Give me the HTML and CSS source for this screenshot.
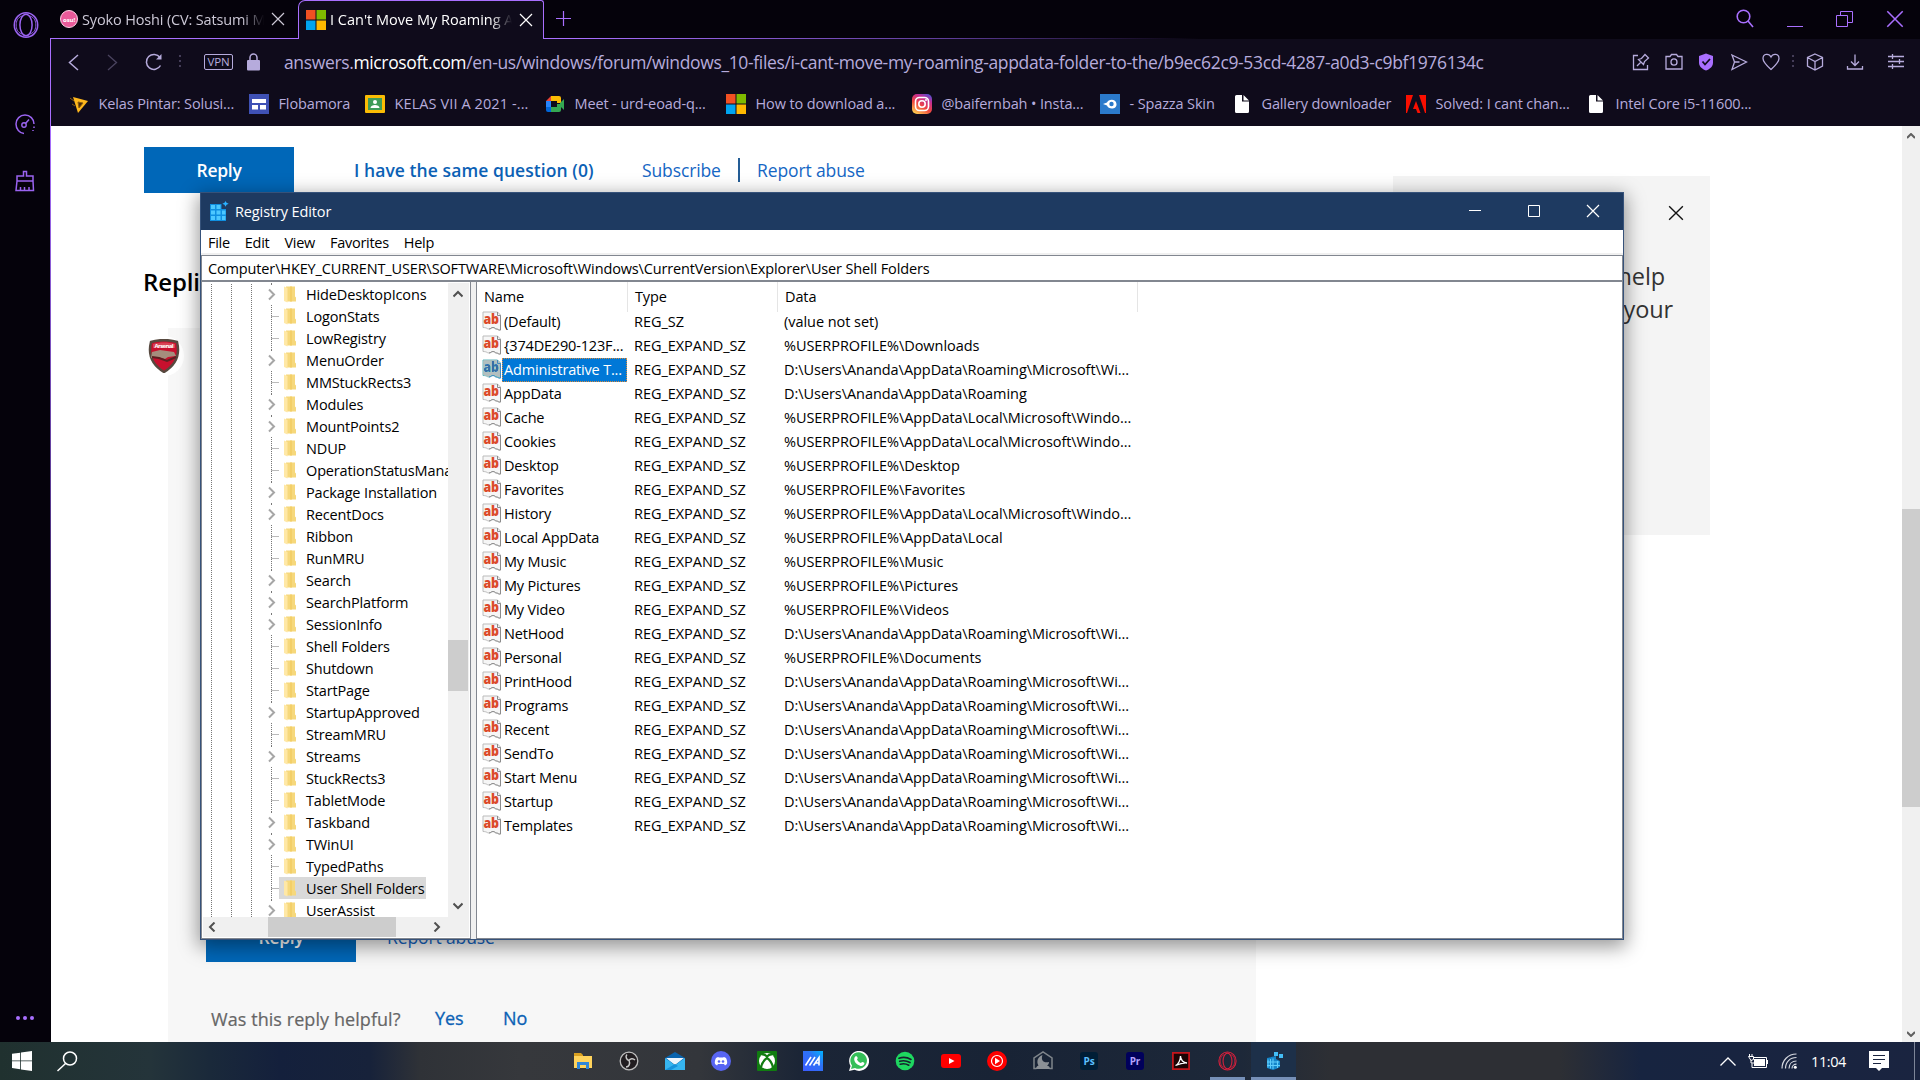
FILE: index.html
```
<!DOCTYPE html>
<html lang="en">
	<head>
		<meta charset="UTF-8" />
		<meta name="viewport" content="width=device-width, initial-scale=1.0" />
		<title>I Can't Move My Roaming AppData</title>
		<link rel="stylesheet" href="styles.css">
	</head>
	<body>
		<!-- shared icons -->
		<svg class="defs" width="0" height="0">
			<symbol id="x" viewBox="0 0 14 14"><path d="M1 1L13 13M13 1L1 13" fill="none" stroke="currentColor" stroke-width="1.200" /></symbol>
			<symbol id="ms" viewBox="0 0 20 20">
				<path fill="#f25022" d="M0 0h9.5v9.5H0z" /><path fill="#7fba00" d="M10.5 0H20v9.5h-9.5z" />
				<path fill="#00a4ef" d="M0 10.5h9.5V20H0z" /><path fill="#ffb900" d="M10.5 10.5H20V20h-9.5z" />
			</symbol>
			<symbol id="file" viewBox="0 0 20 20"><path fill="#fff" d="M3 2.500a1.500 1.500 0 0 1 1.500-1.500H10v6.500h7V17.500a1.500 1.500 0 0 1-1.500 1.500H4.500A1.500 1.500 0 0 1 3 17.500zM11.500 1l5.500 5.500h-5.500z" /></symbol>
			<symbol id="folder" viewBox="0 0 13 17">
				<path fill="#f6d87c" d="M2 .5h9v10l1 1v4H2z" /><path fill="#f3cf68" d="M6 .5h2v15H6z" />
				<path fill="#ffe8a6" d="M0 .5l3.500 1.500v14.500L0 15z" />
			</symbol>
			<symbol id="opera" viewBox="0 0 28 32"><g fill="none" stroke="currentColor" stroke-width="1.600"><ellipse cx="14" cy="16" rx="12.500" ry="13" /><ellipse cx="14" cy="16" rx="6.500" ry="11.500" /><path d="M9.500 6.500C5 8 3.500 12 3.500 16s1.500 8 6 9.500M18.500 6.500C23 8 24.500 12 24.500 16s-1.500 8-6 9.500" stroke-width="1" /></g></symbol>
		</svg>

		<div class="browser">
			<div class="sidebar">
				<svg class="opera-logo" width="28" height="30"><use href="#opera" /></svg>
				<svg class="speed" width="20" height="22" viewBox="0 0 20 22"><path d="M9 20.500C4.500 20 1 16 1 11a9 9 0 0 1 18 0" fill="none" stroke="currentColor" stroke-width="1.500" /><path d="M19 13.500v1.500M18 17v1" stroke="currentColor" stroke-width="1.500" /><circle cx="9" cy="12" r="2.200" fill="none" stroke="currentColor" stroke-width="1.400" /><path d="M10.500 10.500L14 6.500" stroke="currentColor" stroke-width="1.500" /></svg>
				<svg class="brush" width="20" height="22" viewBox="0 0 20 22"><path d="M2 11V6h6.500V1.500h3V6H18v5zM2 11L1 20.500h17.500L18 11M5.500 20.500V17M9.500 20.500V17M14 20.500V17" fill="none" stroke="currentColor" stroke-width="1.500" /></svg>
				<div class="dots"><i></i><i></i><i></i></div>
			</div>
			<div class="main">
				<div class="tabs">
					<div class="tab">
						<svg width="18" height="18" viewBox="0 0 18 18"><circle cx="9" cy="9" r="8.500" fill="#ea5a9a" stroke="#ffd0e5" /><text x="3" y="11.500" class="osu" textLength="12">osu!</text></svg>
						<span class="tab-title">Syoko Hoshi (CV: Satsumi M</span>
						<svg class="tab-x" width="14" height="14"><use href="#x" /></svg>
					</div>
					<div class="tab active">
						<svg width="20" height="20"><use href="#ms" /></svg>
						<span class="tab-title">I Can't Move My Roaming A</span>
						<svg class="tab-x" width="14" height="14"><use href="#x" /></svg>
					</div>
					<svg class="plus" width="15" height="15" viewBox="0 0 15 15"><path d="M0 7.500h15M7.500 0v15" stroke="currentColor" stroke-width="1.200" /></svg>
					<div class="window-buttons">
						<svg width="18" height="19" viewBox="0 0 18 19"><circle cx="7.500" cy="7.500" r="6.300" fill="none" stroke="currentColor" stroke-width="1.600" /><path d="M12 12l5 6" stroke="currentColor" stroke-width="1.600" /></svg>
						<svg width="16" height="18" viewBox="0 0 16 18"><path d="M0 16.500h16" stroke="currentColor" /></svg>
						<svg width="17" height="18" viewBox="0 0 17 18"><path d="M.5 5.500h11v11H.500zM4.500 5.500V1.500h12v11H12" fill="none" stroke="currentColor" /></svg>
						<svg width="18" height="18"><use href="#x" /></svg>
					</div>
				</div>

				<div class="navbar">
					<svg class="back" width="11" height="17" viewBox="0 0 11 17"><path d="M10 1L1.500 8.500 10 16" fill="none" stroke="currentColor" stroke-width="1.500" /></svg>
					<svg class="forward" width="11" height="17" viewBox="0 0 11 17"><path d="M1 1l8.500 7.500L1 16" fill="none" stroke="currentColor" stroke-width="1.300" /></svg>
					<svg class="reload" width="18" height="18" viewBox="0 0 18 18"><path d="M15.500 12.500A7.500 7.500 0 1 1 15 4.500" fill="none" stroke="currentColor" stroke-width="1.500" /><path d="M16.500 1v5.500H11z" fill="currentColor" /></svg>
					<span class="sep"></span>
					<span class="vpn">VPN</span>
					<svg class="lock" width="13" height="18" viewBox="0 0 13 18"><path d="M3 8V4.500a3.500 3.500 0 0 1 7 0V8" fill="none" stroke="currentColor" stroke-width="1.500" /><rect y="7" width="13" height="10.500" rx="1" fill="currentColor" /></svg>
					<span class="url">answers.<b>microsoft.com</b>/en-us/windows/forum/windows_10-files/i-cant-move-my-roaming-appdata-folder-to-the/b9ec62c9-53cd-4287-a0d3-c9bf1976134c</span>
					<div class="nav-icons">
						<svg width="18" height="18" viewBox="0 0 18 18"><path d="M6 2.500H1.500v14h14V12M5 13l4-4M6.500 6.500l5 5 1-3 4-3.500L13 1.500l-3.500 4z" fill="none" stroke="currentColor" stroke-width="1.300" /></svg>
						<svg width="18" height="18" viewBox="0 0 18 18"><path d="M1 3.500h4L6.500 1.500h5L13 3.500h4v12.500H1z" fill="none" stroke="currentColor" stroke-width="1.300" /><ellipse cx="9" cy="9" rx="3" ry="3.200" fill="none" stroke="currentColor" stroke-width="1.300" /></svg>
						<svg width="18" height="18" viewBox="0 0 18 18"><path d="M9 .5l7 2.500v6.500c0 4-3 6.500-7 8-4-1.500-7-4-7-8V3z" fill="#a96fff" /><path d="M5.500 8.500l2.500 3 5-5.500" fill="none" stroke="#0f0b1b" stroke-width="1.800" /></svg>
						<svg width="18" height="18" viewBox="0 0 18 18"><path d="M2 2l14.500 7L2 16.500l2.500-7.500zM4.500 9h5" fill="none" stroke="currentColor" stroke-width="1.300" /></svg>
						<svg width="18" height="18" viewBox="0 0 18 18"><path d="M9 16.500C4 12 1 9 1 5.500 1 .5 7 0 9 4c2-4 8-3.500 8 1.500 0 3.500-3 6.500-8 11z" fill="none" stroke="currentColor" stroke-width="1.300" /></svg>
						<span class="sep"></span>
						<svg class="cube" width="18" height="18" viewBox="0 0 18 18"><path d="M9 1l7.500 3.500v8.500L9 17l-7.500-4V4.500zM1.500 4.500L9 8.500l7.500-4M9 8.500V17" fill="none" stroke="currentColor" stroke-width="1.300" /></svg>
						<svg class="download" width="18" height="18" viewBox="0 0 18 18"><path d="M9 1.500V12M5 8.500L9 12.500l4-4M1.500 13v3h15v-3" fill="none" stroke="currentColor" stroke-width="1.300" /></svg>
						<svg class="setup" width="18" height="18" viewBox="0 0 18 18"><path d="M1 3.500h16M1 8.500h16M1 13.500h16M5.500 1v5M12.500 6v5M5.500 11v5" fill="none" stroke="currentColor" stroke-width="1.300" /></svg>
					</div>
				</div>

				<div class="bookmarks">
					<div><svg width="20" height="20" viewBox="0 0 20 20"><path fill="#ffb81c" d="M4 3l15 4L9 19z" /><path d="M9 8l5 1-4 5zM1 4l4 3M3 10l3 2" fill="#4a2c0a" stroke="#8a5c10" /></svg>Kelas Pintar: Solusi...</div>
					<div><svg width="20" height="20" viewBox="0 0 20 20"><path fill="#3f51b5" d="M0 0h20v20H0z" /><path fill="#fff" d="M3 5h14v4H3zM3 11h6v4.500H3zM11 11h6v4.500h-6z" /></svg>Flobamora</div>
					<div class="kelas"><svg width="20" height="20" viewBox="0 0 20 20"><rect y="1" width="20" height="18" rx="1" fill="#fbbc04" /><path fill="#3f9c58" d="M3 4h14v12H3z" /><circle cx="10" cy="8" r="2" fill="#fff" /><path fill="#fff" d="M5.500 14c0-4 9-4 9 0z" /></svg>KELAS VII A 2021 -...</div>
					<div><svg width="20" height="20" viewBox="0 0 20 20"><path fill="#fbbc04" d="M6 2h8a2 2 0 0 1 2 2v5h-4V7H6z" /><path fill="#ea4335" d="M6 2v5H1z" /><path fill="#2684fc" d="M1 7h5v6H1z" /><path fill="#0066da" d="M1 13h5v5H3a2 2 0 0 1-2-2z" /><path fill="#34a853" d="M6 13h6v-3h4v6a2 2 0 0 1-2 2H6zM15 9l4-4v11l-4-4z" /></svg>Meet - urd-eoad-q...</div>
					<div><svg width="20" height="20"><use href="#ms" /></svg>How to download a...</div>
					<div><svg width="20" height="20" viewBox="0 0 20 20"><defs><linearGradient id="ig" x1="0.2" y1="1" x2="0.8" y2="0"><stop offset="0" stop-color="#ffd050" /><stop offset=".4" stop-color="#f0483d" /><stop offset=".75" stop-color="#c42d92" /><stop offset="1" stop-color="#5a4fd0" /></linearGradient></defs><rect width="20" height="20" rx="5" fill="url(#ig)" /><rect x="3.500" y="3.500" width="13" height="13" rx="4" fill="none" stroke="#fff" stroke-width="1.600" /><circle cx="10" cy="10" r="3.200" fill="none" stroke="#fff" stroke-width="1.600" /><circle cx="14" cy="6" r="1" fill="#fff" /></svg>@baifernbah • Insta...</div>
					<div><svg width="20" height="20" viewBox="0 0 20 20"><path fill="#2b7acb" d="M0 0h20v20H0z" /><path fill="#fff" d="M3 10l4-1.500C8 5 16 4 16.500 10S8 15.500 7 11.500z" /><circle cx="11.500" cy="10" r="2.200" fill="#2b7acb" /></svg>- Spazza Skin</div>
					<div><svg width="20" height="20"><use href="#file" /></svg>Gallery downloader</div>
					<div><svg width="20" height="20" viewBox="0 0 20 20"><path fill="#fa0f00" d="M0 1h7L1 19H0zM13 1h7v18h-1zM10 7l4.500 12h-3l-1.500-4H7z" /></svg>Solved: I cant chan...</div>
					<div><svg width="20" height="20"><use href="#file" /></svg>Intel Core i5-11600...</div>
				</div>

				<div class="page">
					<div class="thread">
						<div class="actions">
							<button class="reply">Reply</button>
							<a class="same">I have the same question (0)</a>
							<a class="subscribe">Subscribe</a>
							<a class="abuse">Report abuse</a>
						</div>
						<h2>Replies</h2>
						<div class="answer">
							<div class="avatar">
								<svg width="32" height="34" viewBox="0 0 32 34"><path d="M3 3C10 .5 22 .5 29 3c3 12 0 22-13 30C3 25 0 15 3 3z" fill="#c8102e" stroke="#57493f" stroke-width="2.500" /><path d="M5 5c7-2 15-2 22 0v4H5z" fill="#d84255" /><text x="6.500" y="8.500" class="crest" textLength="19">Arsenal</text><path d="M4 13l8-2 14 2 2 4-8 1-3 2-7-2-7 1z" fill="#a58d7d" /><path d="M4 18l7 1 8 3 9-4" fill="none" stroke="#5e2022" stroke-width="2" /></svg>
							</div>
							<div class="answer-actions">
								<button class="reply">Reply</button>
								<a>Report abuse</a>
							</div>
							<div class="helpful">
								<span>Was this reply helpful?</span>
								<a class="yes">Yes</a>
								<a>No</a>
							</div>
						</div>
					</div>
					<div class="survey">
						<svg width="16" height="16"><use href="#x" /></svg>
						<p>help</p>
						<p class="second">your</p>
					</div>
					<div class="page-scroll">
						<svg width="8" height="6" viewBox="0 0 8 6"><path d="M0 5l4-4 4 4" fill="none" stroke="#606060" stroke-width="2" /></svg>
						<div class="thumb"></div>
						<svg width="8" height="6" viewBox="0 0 8 6"><path d="M0 1l4 4 4-4" fill="none" stroke="#606060" stroke-width="2" /></svg>
					</div>
				</div>
			</div>
		</div>

		<div class="regedit">
			<div class="titlebar">
				<svg width="20" height="20" viewBox="0 0 20 20"><path fill="#0f8fe0" d="M1 3h16v17H1z" /><path fill="#4cc8ff" d="M2 4h4v4H2zM7.500 4h4v4h-4zM2 9.500h4v4H2zM7.500 9.500h4v4h-4zM13 9.500h3.500v4H13zM2 15h4v4H2zM7.500 15h4v4h-4zM13 15h3.500v4H13z" /><path fill="#1e3a61" d="M12.500 3H17v5h-4.500z" /><path fill="#2bb0ff" d="M16.500 0l1 1.800 2.200 1-2.200 1-1 2-1-2-2.200-1 2.200-1z" /></svg>
				<span>Registry Editor</span>
				<div class="reg-buttons">
					<svg width="14" height="14" viewBox="0 0 14 14"><path d="M1 6.500h12" stroke="#fff" /></svg>
					<svg width="14" height="14" viewBox="0 0 14 14"><path d="M1.500 1.500h11v11h-11z" fill="none" stroke="#fff" /></svg>
					<svg width="14" height="14"><use href="#x" /></svg>
				</div>
			</div>
			<div class="menu"><span>File</span><span>Edit</span><span>View</span><span>Favorites</span><span>Help</span></div>
			<div class="address">Computer\HKEY_CURRENT_USER\SOFTWARE\Microsoft\Windows\CurrentVersion\Explorer\User Shell Folders</div>
			<div class="panes">
				<div class="tree-pane">
					<div class="tree-top">
						<div class="tree" id="tree"></div>
						<div class="vscroll">
							<svg width="10" height="8" viewBox="0 0 10 8"><path d="M.5 6.500L5 2l4.500 4.500" fill="none" stroke="#505050" stroke-width="2" /></svg>
							<div class="thumb"></div>
							<svg width="10" height="8" viewBox="0 0 10 8"><path d="M.5 1.500L5 6l4.500-4.500" fill="none" stroke="#505050" stroke-width="2" /></svg>
						</div>
					</div>
					<div class="hscroll">
						<svg width="8" height="10" viewBox="0 0 8 10"><path d="M6.500 .5L2 5l4.500 4.500" fill="none" stroke="#505050" stroke-width="2" /></svg>
						<div class="thumb"></div>
						<svg width="8" height="10" viewBox="0 0 8 10"><path d="M1.500 .5L6 5 1.500 9.500" fill="none" stroke="#505050" stroke-width="2" /></svg>
					</div>
				</div>
				<div class="list-pane">
					<div class="list-head"><span>Name</span><span>Type</span><span>Data</span></div>
					<div id="values"></div>
				</div>
			</div>
		</div>

		<div class="taskbar">
			<svg class="start" width="20" height="20" viewBox="0 0 20 20"><path fill="#fff" d="M0 2.800l8.200-1.100v7.800H0zM9 1.600L20 0v9.500H9zM0 10.300h8.200v7.900L0 17.100zM9 10.300h11V20L9 18.400z" /></svg>
			<svg class="search" width="22" height="21" viewBox="0 0 22 21"><circle cx="14" cy="7.500" r="6.500" fill="none" stroke="#fff" stroke-width="1.500" /><path d="M9.500 12.500L1.500 20" stroke="#fff" stroke-width="1.500" /></svg>
			<div class="apps">
				<div><svg width="20" height="20" viewBox="0 0 20 20"><path fill="#d9a021" d="M1 2h7l2 2v4H1z" /><path fill="#ffd35c" d="M1 5h18v12H1z" /><path fill="#2f86d8" d="M4 11h12v7h-3v-4H7v4H4z" /></svg></div>
				<div><svg width="20" height="20" viewBox="0 0 20 20"><circle cx="10" cy="10" r="8.800" fill="#211d20" stroke="#bdbdbd" stroke-width="1.300" /><path d="M8 3.500c-2 2-.5 5.500 2 6M16 9c-2-2-5-1.500-6 .5M7 16c3 0 4.500-3.500 3-6.500" fill="none" stroke="#c8c8c8" stroke-width="1.500" /></svg></div>
				<div><svg width="20" height="20" viewBox="0 0 20 20"><path fill="#0a64ad" d="M0 7l10-6 10 6v5H0z" /><path fill="#eef6fc" d="M1 7h18l-9 7z" /><path fill="#36b5f0" d="M0 7l10 7L20 7v12H0z" /><path fill="#1593dc" d="M0 19l10-6 3 2-7 4z" /></svg></div>
				<div><svg width="20" height="20" viewBox="0 0 20 20"><circle cx="10" cy="10" r="10" fill="#5865f2" /><path fill="#fff" d="M7 6l1 .5h4L13 6l2 1c1 2 1.500 4 1 6l-2 1.500-1-1.500H7l-1 1.500L4 13c-.5-2 0-4 1-6z" /><circle cx="8" cy="10.500" r="1.300" fill="#5865f2" /><circle cx="12" cy="10.500" r="1.300" fill="#5865f2" /></svg></div>
				<div><svg width="20" height="20" viewBox="0 0 20 20"><rect width="20" height="20" rx="1" fill="#107c10" /><circle cx="10" cy="10" r="8" fill="#fff" /><path d="M4 16.500C5 12 7.500 8.500 10 7c2.500 1.500 5 5 6 9.500M4.500 3.500C7 3 9 4.500 10 5.500c1-1 3-2.500 5.500-2" fill="none" stroke="#107c10" stroke-width="2.200" /></svg></div>
				<div><svg width="20" height="20" viewBox="0 0 20 20"><defs><linearGradient id="ac" x1="0" y1="1" x2="1" y2="0"><stop offset="0" stop-color="#3c5cff" /><stop offset=".6" stop-color="#2d72f5" /><stop offset="1" stop-color="#00b4ff" /></linearGradient></defs><path fill="url(#ac)" d="M0 0h20v20H0z" /><path d="M2.500 14.500l5.500-8.500M6.500 14.500L12 6M10.500 14.500L16 6.500v8M12.500 12H16" fill="none" stroke="#fff" stroke-width="1.600" /></svg></div>
				<div><svg width="20" height="20" viewBox="0 0 20 20"><path fill="#fff" d="M0 20l1.500-5A10 10 0 1 1 5.500 18.800z" /><path fill="#35bf58" d="M2 18l1-3.500A8.300 8.300 0 1 1 6 17z" /><path fill="#fff" d="M7 5c2 1 2 2.500 1 3.500 1 2 2 3 4 3.500 1-1.500 2-1 3.500 0-1 4-4 3.500-7 1.500C5 11 4 7 7 5z" /></svg></div>
				<div><svg width="20" height="20" viewBox="0 0 20 20"><circle cx="10" cy="10" r="9.300" fill="#1ed760" /><path d="M4 7.200c4-1.200 8.500-.8 12 1.200M4.700 10.300c3.500-1 7.200-.5 10.300 1.200M5.300 13.200c3-.8 6-.4 8.500 1" fill="none" stroke="#17202e" stroke-width="1.700" stroke-linecap="round" /></svg></div>
				<div><svg width="20" height="20" viewBox="0 0 20 20"><rect y="3" width="20" height="14" rx="3" fill="#f00" /><path fill="#fff" d="M8 7l5.500 3L8 13z" /></svg></div>
				<div><svg width="20" height="20" viewBox="0 0 20 20"><circle cx="10" cy="10" r="10" fill="#f00" /><circle cx="10" cy="10" r="5.500" fill="none" stroke="#fff" stroke-width="1.200" /><path fill="#fff" d="M8 6.800l5 3.200-5 3.200z" /></svg></div>
				<div><svg width="20" height="20" viewBox="0 0 20 20"><path d="M3.500 17.500H1V7l9-6 9 6v10.500h-2.500" fill="none" stroke="#7f858b" stroke-width="1.500" /><path fill="#8c9196" d="M9.500 4c-2 5 1 8.500 6.500 7 0 2-1 3-2 3.500 2 .5 3 1.500 3 3.500H3c0-2 1-3 2.500-3.500C3 10.500 5 5.500 9.500 4z" /></svg></div>
				<div class="adobe ps">Ps</div>
				<div class="adobe pr">Pr</div>
				<div><svg width="20" height="20" viewBox="0 0 20 20"><path fill="#1c0404" stroke="#c4161c" stroke-width="1.800" d="M1.900 1.900h16.200v16.200H1.900z" /><path d="M4.500 14.500c3-1 5-6 5-9.500 0 4 3 7 6.500 7-4-.5-8 1-11.500 2.500z" fill="none" stroke="#fff" stroke-width="1.300" /></svg></div>
				<div class="running red"><svg width="21" height="22"><use href="#opera" /></svg></div>
				<div class="current"><svg width="20" height="20" viewBox="0 0 20 20"><path fill="#1485c9" d="M3 7l9-2v13l-3 1-6-2zM12 8l4 2v6l-4 2z" /><path d="M4 8.500v8M6.500 8v9.500M9 7.500V18M13.500 10v7M3 11h12M3 14.500h13" stroke="#60cdfb" stroke-width="1.100" /><path fill="#43bdf5" d="M10 1h4v4h-4zM15 3h4v4h-4z" /></svg></div>
			</div>
			<div class="tray">
				<svg class="up" width="16" height="9" viewBox="0 0 16 9"><path d="M.5 8.500L8 1l7.500 7.500" fill="none" stroke="#fff" stroke-width="1.300" /></svg>
				<svg class="battery" width="20" height="15" viewBox="0 0 20 15"><path d="M4 3.500h14.500v10H4v-4" fill="none" stroke="#fff" /><path fill="#fff" d="M6 5h11v7H6zM19 6h1v4h-1z" /><path d="M1.500 0v3M4 0v3M.5 2.500h5v3l-2.500 1zM3 6v3h3" fill="#1a2440" stroke="#fff" /></svg>
				<svg class="wifi" width="16" height="16" viewBox="0 0 16 16"><g fill="none" stroke="#d6d9e0" stroke-width="1.200"><path d="M1 15.500C1 7.500 7 1 15.500 1" /><path d="M4.500 15.500C4.500 9 9 4.500 15.500 4.500" /><path d="M8 15.500C8 11 11 8 15.500 8" /><path d="M11 15.500c0-2.500 2-4.300 4.500-4.300" /></g><circle cx="14.300" cy="14.300" r="1.500" fill="#fff" /></svg>
				<span class="clock">11:04</span>
				<svg class="notice" width="20" height="20" viewBox="0 0 20 20"><path fill="#fff" d="M0 0h20v17h-7l-3 3-3-3H0z" /><path d="M4 4.500h12M4 8.500h12M4 12.500h8" stroke="#1a2440" /></svg>
				<span class="show-desktop"></span>
			</div>
		</div>
		<script src="script.js"></script>
	</body>
</html>
```
FILE: styles.css
```
* {
	box-sizing: border-box;
}
body {
	margin: 0;
	width: 1920px;
	height: 1080px;
	overflow: hidden;
	display: flex;
	flex-direction: column;
	font-family: "Open Sans", "Noto Sans", sans-serif;
	font-size: 14.5px;
	letter-spacing: -0.12px;
	color: #000;
}
svg {
	display: block;
	flex: none;
}
.defs {
	display: none;
}
.browser {
	display: flex;
	height: 1042px;
	background: #05020b;
}

/* opera sidebar */
.sidebar {
	width: 50px;
	display: flex;
	flex-direction: column;
	align-items: center;
	color: #9a63f0;
}
.opera-logo {
	margin: 10px 0 0 1px;
}
.speed {
	margin-top: 73px;
}
.brush {
	margin-top: 35px;
}
.dots {
	display: flex;
	gap: 3px;
	margin-top: auto;
	margin-bottom: 22px;
}
.dots i {
	width: 4px;
	height: 4px;
	border-radius: 50%;
	background: #a96fff;
}
.main {
	flex: 1;
	display: flex;
	flex-direction: column;
	min-width: 0;
}

/* tabs */
.tabs {
	height: 39px;
	display: flex;
	background: linear-gradient(to right, #a96fff 530px, #5e3c98 900px, #05020b 1150px) bottom / 100% 1px no-repeat;
}
.tab {
	width: 248px;
	height: 38px;
	display: flex;
	align-items: center;
	padding: 0 0 0 10px;
	color: #ccc8d6;
}
.tab-title {
	width: 182px;
	margin-left: 4px;
	overflow: hidden;
	white-space: nowrap;
	letter-spacing: -0.15px;
	-webkit-mask-image: linear-gradient(to right, #000 88%, transparent);
}
.tab-x {
	margin-left: 7px;
}
.tab.active {
	width: 246px;
	height: 39px;
	padding: 0 0 1px 7px;
	background: #0f0b1b;
	border: 1px solid #a96fff;
	border-bottom: 0;
	border-radius: 7px 3px 0 0;
	color: #fff;
}
.active .tab-title {
	letter-spacing: 0;
}
.plus {
	margin: 11px 0 0 12px;
	color: #a96fff;
}
.window-buttons {
	display: flex;
	align-items: center;
	gap: 33px;
	height: 37px;
	margin-left: auto;
	padding-right: 16px;
	color: #a96fff;
}

.navbar {
	height: 47px;
	display: flex;
	align-items: center;
	padding-bottom: 1px;
	background: #0f0b1b;
	border-left: 1px solid #a96fff;
	color: #b6abdc;
}
.back {
	margin-left: 17px;
}
.forward {
	margin-left: 28px;
	opacity: 0.35;
}
.reload {
	margin-left: 27px;
}
.sep {
	width: 2px;
	height: 14px;
	background: repeating-linear-gradient(#443d58 0 2px, transparent 2px 5px);
}
.reload + .sep {
	margin-left: 16px;
}
.vpn {
	width: 29px;
	height: 16px;
	margin-left: 23px;
	border: 1px solid #b6abdc;
	border-radius: 2px;
	font-size: 11.5px;
	line-height: 14px;
	text-align: center;
}
.lock {
	margin-left: 14px;
}
.url {
	margin-left: 24px;
	padding-bottom: 1px;
	font-size: 17.5px;
	letter-spacing: -0.355px;
	white-space: nowrap;
}
.url b {
	font-weight: 400;
	color: #fff;
}
.nav-icons {
	display: flex;
	align-items: center;
	gap: 14.5px;
	margin-left: auto;
	padding-right: 15px;
}
.nav-icons .sep {
	margin-left: -3px;
}
.nav-icons .cube {
	margin-left: -2px;
}
.download {
	margin-left: 7px;
}
.setup {
	margin-left: 9px;
}

.bookmarks {
	height: 40px;
	display: grid;
	grid-template-columns: 180px 116px 180px 181px 186px 188px 132px 174px 180px 180px;
	padding: 0 0 5px 18px;
	background: #0f0b1b;
	border-left: 1px solid #a96fff;
	color: #b6abdc;
	letter-spacing: -0.13px;
}
.bookmarks div {
	display: flex;
	align-items: center;
	gap: 9.5px;
	white-space: nowrap;
}
.bookmarks .kelas {
	letter-spacing: 0.1px;
}

/* forum page */
.page {
	flex: 1;
	display: flex;
	background: linear-gradient(#a96fff, #5b3b93 40%, #05020b 80%) left / 1px 100% no-repeat #fff;
	min-height: 0;
}
.thread {
	width: 1206px;
	display: flex;
	flex-direction: column;
}
.actions {
	display: flex;
	align-items: center;
	margin: 21px 0 0 94px;
	font-size: 17.5px;
}
.reply {
	width: 150px;
	height: 46px;
	padding: 0;
	border: 0;
	background: #0067b8;
	color: #fff;
	font: 600 17.5px "Open Sans", sans-serif;
	letter-spacing: -0.3px;
}
.actions a,
.answer-actions a {
	color: #1566c4;
}
.helpful a,
.actions .same {
	color: #0b61b5;
}
.same {
	width: 288px;
	margin-left: 60px;
	font-weight: 600;
	letter-spacing: 0.07px;
}
.subscribe {
	width: 98px;
	border-right: 2px solid #245d96;
}
.abuse {
	margin-left: 17px;
}
h2 {
	margin: 72px 0 0 93px;
	font-size: 24px;
	line-height: 34px;
	font-weight: 600;
}
.answer {
	flex: 1;
	display: flex;
	flex-direction: column;
	margin: 29px 0 0 118px;
	background: #f7f7f7;
	font-size: 17.5px;
}
.avatar {
	width: 40px;
	height: 40px;
	display: flex;
	align-items: center;
	justify-content: center;
	margin: 8px 0 0 -24px;
	border-radius: 50%;
	background: #fff;
}
.crest {
	font: 700 6px "Open Sans", sans-serif;
	fill: #fff;
}
.answer-actions {
	display: flex;
	align-items: center;
	gap: 31px;
	margin: auto 0 0 38px;
}
.answer-actions .reply,
.answer-actions a {
	padding-bottom: 4px;
}
.helpful {
	display: flex;
	align-items: center;
	height: 30px;
	margin: 42px 0 8px 43px;
	color: #666;
	font-size: 18px;
}
.helpful span {
	width: 224px;
	font-weight: 500;
	letter-spacing: 0.07px;
	-webkit-text-stroke: 0.2px #666;
}
.helpful a {
	padding-bottom: 3px;
	-webkit-text-stroke: 0.3px #0b61b5;
}
.yes {
	width: 68px;
}
.survey {
	width: 317px;
	height: 359px;
	margin: 50px 0 0 137px;
	background: #f4f4f4;
	color: #333;
	text-align: right;
}
.survey svg {
	margin: 29px 0 0 auto;
	margin-right: 26px;
	color: #111;
}
.survey p {
	margin: 39px 45px 0 0;
	font-size: 23.5px;
	line-height: 33px;
}
.survey .second {
	margin: 0 37px 0 0;
}
.page-scroll {
	width: 18px;
	margin-left: auto;
	padding: 7px 0 5px;
	display: flex;
	flex-direction: column;
	align-items: center;
	background: #f0f0f0;
}
.page-scroll .thumb {
	width: 18px;
	height: 298px;
	margin: 370px 0 auto;
	background: #cdcdcd;
}

/* registry editor window */
.regedit {
	position: absolute;
	left: 200px;
	top: 192px;
	width: 1424px;
	height: 748px;
	display: flex;
	flex-direction: column;
	border: 1px solid #36527a;
	background: #f0f0f0;
	box-shadow: 0 5px 18px 2px rgba(0, 0, 0, 0.4);
}
.titlebar {
	height: 37px;
	display: flex;
	align-items: center;
	padding: 0 0 1px 8px;
	background: #1e3a61;
	color: #fff;
}
.titlebar > span {
	margin-left: 6px;
}
.reg-buttons {
	display: flex;
	gap: 45px;
	margin-left: auto;
	padding-right: 23px;
}
.menu {
	height: 23px;
	display: flex;
	gap: 15px;
	padding-left: 7px;
	line-height: 25px;
	letter-spacing: -0.28px;
	background: #fff;
}
.address {
	height: 27px;
	margin-top: 2px;
	padding-left: 6px;
	border: 1px solid #828790;
	border-bottom-width: 2px;
	line-height: 26px;
	letter-spacing: -0.14px;
	background: #fff;
}
.panes {
	flex: 1;
	display: flex;
	gap: 5px;
	min-height: 0;
}
.tree-pane {
	width: 270px;
	padding: 1px;
	border: 1px solid #828790;
	border-top: 0;
	background: #fff;
}
.tree-top {
	display: flex;
	height: 634px;
}
.tree {
	width: 245px;
	overflow: hidden;
	/* guides for the three parent levels */
	background: repeating-linear-gradient(#fff 0 1px, transparent 1px 2px), linear-gradient(to right, transparent 8px, #777 8px 9px, transparent 9px 28px, #777 28px 29px, transparent 29px 48px, #777 48px 49px, transparent 49px);
}
.node {
	height: 22px;
	display: flex;
	align-items: center;
	padding-left: 65px;
	white-space: nowrap;
}
.twig {
	width: 11px;
	height: 22px;
	flex: none;
}
.twig path {
	fill: none;
}
.label {
	height: 22px;
	display: flex;
	align-items: center;
	gap: 9px;
	padding: 2px 2px 0 5px;
	line-height: 20px;
	letter-spacing: -0.15px;
}
.label svg {
	margin-bottom: 1px;
}
.label.selected {
	background: #d9d9d9;
}
.vscroll {
	width: 21px;
	padding: 7px 1px 7px 0;
	display: flex;
	flex-direction: column;
	align-items: center;
	background: #f0f0f0;
}
.vscroll .thumb {
	width: 20px;
	height: 51px;
	margin: 342px 0 auto;
	background: #cdcdcd;
}
.hscroll {
	height: 20px;
	display: flex;
	align-items: center;
	padding: 0 28px 0 5px;
	background: #f0f0f0;
}
.hscroll .thumb {
	width: 128px;
	height: 20px;
	margin: 0 auto 0 52px;
	background: #cdcdcd;
}
.list-pane {
	flex: 1;
	border: 1px solid #828790;
	border-top: 0;
	background: #fff;
}
.list-head {
	display: grid;
	grid-template-columns: 151px 150px 360px;
	height: 28px;
	line-height: 30px;
}
.list-head span {
	padding-left: 7px;
	border-right: 1px solid #e5e5e5;
}
.value {
	display: grid;
	grid-template-columns: 25px 125px 150px 360px;
	height: 24px;
	line-height: 23px;
	white-space: nowrap;
}
.value svg {
	margin: 1px 0 0 5px;
}
.value .name {
	padding-left: 2px;
	letter-spacing: -0.17px;
}
.value .type,
.value .data {
	padding-left: 7px;
}
.value .type {
	letter-spacing: -0.04px;
}
.value .data {
	letter-spacing: -0.05px;
}
.value.selected .name {
	background: #0078d7;
	color: #fff;
	outline: 1px dotted #d98a3a;
	outline-offset: -1px;
}
.value.selected svg {
	filter: sepia(1) hue-rotate(170deg) saturate(3) brightness(0.75);
}
.ab-text {
	font: 800 13.5px "Open Sans", sans-serif;
	fill: #dc4a2b;
}
.osu {
	font: 700 6px "Open Sans", sans-serif;
	fill: #fff;
}

/* windows taskbar */
.taskbar {
	height: 38px;
	display: flex;
	align-items: center;
	background: linear-gradient(to right, #20312f 0, #24343a 150px, #1a293a 210px, #14203c 280px, #17223a 370px, #2f3237 420px, #36383c 520px, #33363b 700px, #1b2536 800px, #182335 1000px, #1d2839 1240px, #2d2f34 1330px, #2d2f34 1560px, #172440 1640px, #1a2440 1920px);
}
.start {
	margin-left: 12px;
}
.search {
	margin-left: 24px;
}
.apps {
	display: flex;
	height: 38px;
	margin-left: 482px;
}
.apps div {
	width: 46px;
	display: flex;
	align-items: center;
	justify-content: center;
}
.apps .adobe {
	width: 18px;
	height: 18px;
	margin: 10px 14px;
	border-radius: 3px;
	font-size: 10px;
	font-weight: 700;
}
.ps {
	background: #001e36;
	color: #5cc0ff;
}
.pr {
	background: #00005b;
	color: #b3a2ff;
}
.apps .running {
	width: 35px;
	margin: 0 6px 0 6px;
	border-bottom: 3px solid #7690b8;
	padding-top: 3px;
}
.red {
	color: #d8203c;
}
.apps .current {
	width: 45px;
	border-bottom: 3px solid #7690b8;
	padding-top: 2px;
	background: #1d3049;
}
.tray {
	display: flex;
	align-items: center;
	margin-left: auto;
	height: 38px;
	color: #fff;
}
.battery {
	margin-left: 12px;
}
.wifi {
	margin-left: 13px;
}
.clock {
	width: 37px;
	margin-left: 14px;
	letter-spacing: -0.4px;
}
.notice {
	margin-left: 21px;
}
.show-desktop {
	width: 6px;
	height: 38px;
	margin-left: 25px;
	border-left: 1px solid #7d8598;
}
```
FILE: script.js
```
// '+' in front of a key means that it has subkeys
const keys = [
	'+HideDesktopIcons', 'LogonStats', 'LowRegistry', '+MenuOrder', 'MMStuckRects3',
	'+Modules', '+MountPoints2', 'NDUP', 'OperationStatusMana', '+Package Installation',
	'+RecentDocs', 'Ribbon', 'RunMRU', '+Search', '+SearchPlatform', '+SessionInfo',
	'Shell Folders', 'Shutdown', 'StartPage', '+StartupApproved', 'StreamMRU', '+Streams',
	'StuckRects3', 'TabletMode', '+Taskband', '+TWinUI', 'TypedPaths', 'User Shell Folders',
	'+UserAssist'
]

const roaming = 'D:\\Users\\Ananda\\AppData\\Roaming\\Microsoft\\Wi...'
const local = '%USERPROFILE%\\AppData\\Local\\Microsoft\\Windo...'
const values = [
	['(Default)', '(value not set)'],
	['{374DE290-123F...', '%USERPROFILE%\\Downloads'],
	['Administrative T...', roaming],
	['AppData', 'D:\\Users\\Ananda\\AppData\\Roaming'],
	['Cache', local],
	['Cookies', local],
	['Desktop', '%USERPROFILE%\\Desktop'],
	['Favorites', '%USERPROFILE%\\Favorites'],
	['History', local],
	['Local AppData', '%USERPROFILE%\\AppData\\Local'],
	['My Music', '%USERPROFILE%\\Music'],
	['My Pictures', '%USERPROFILE%\\Pictures'],
	['My Video', '%USERPROFILE%\\Videos'],
	['NetHood', roaming],
	['Personal', '%USERPROFILE%\\Documents'],
	['PrintHood', roaming],
	['Programs', roaming],
	['Recent', roaming],
	['SendTo', roaming],
	['Start Menu', roaming],
	['Startup', roaming],
	['Templates', roaming]
]

const arrow = '<path d="M1 6.500l5 5-5 5" stroke="#a6a6a6" stroke-width="2" /><path d="M3.500 0v2" stroke="#777" />'
const branch = '<path d="M3.500 0v22M3.500 11.500H12" stroke="#777" stroke-dasharray="1 1" />'

// string value icon, a torn sheet with "ab" on it
const sheet = `<svg width="20" height="20" viewBox="0 0 20 20">
	<path d="M1 1h14.500l3 3V19c-2 .5-2.500-1-4-1s-1.500-1.500-3.500-1.500-2 1.500-4 1.500-2-1.500-6-1.500z" fill="#f6f6f6" stroke="#bbb" />
	<path d="M15.500 1v3.500h3V19c-2 .5-2.500-1-4-1s-1.500-1.500-3.500-1.500-2 1.500-4 1.500" fill="none" stroke="#8c8c8c" />
	<text x="1.500" y="13" class="ab-text" textLength="15.500" lengthAdjust="spacingAndGlyphs">ab</text>
</svg>`

document.getElementById('tree').innerHTML = keys.map(key => {
	const name = key.replace('+', '')
	const selected = name === 'User Shell Folders' ? ' selected' : ''
	return `<div class="node">
		<svg class="twig" viewBox="0 0 11 22">${key[0] === '+' ? arrow : branch}</svg>
		<span class="label${selected}"><svg width="13" height="17"><use href="#folder" /></svg>${name}</span>
	</div>`
}).join('')

document.getElementById('values').innerHTML = values.map(([name, data]) => `
	<div class="value${name.startsWith('Administrative') ? ' selected' : ''}">
		${sheet}
		<span class="name">${name}</span>
		<span class="type">${name === '(Default)' ? 'REG_SZ' : 'REG_EXPAND_SZ'}</span>
		<span class="data">${data}</span>
	</div>`).join('')
```
